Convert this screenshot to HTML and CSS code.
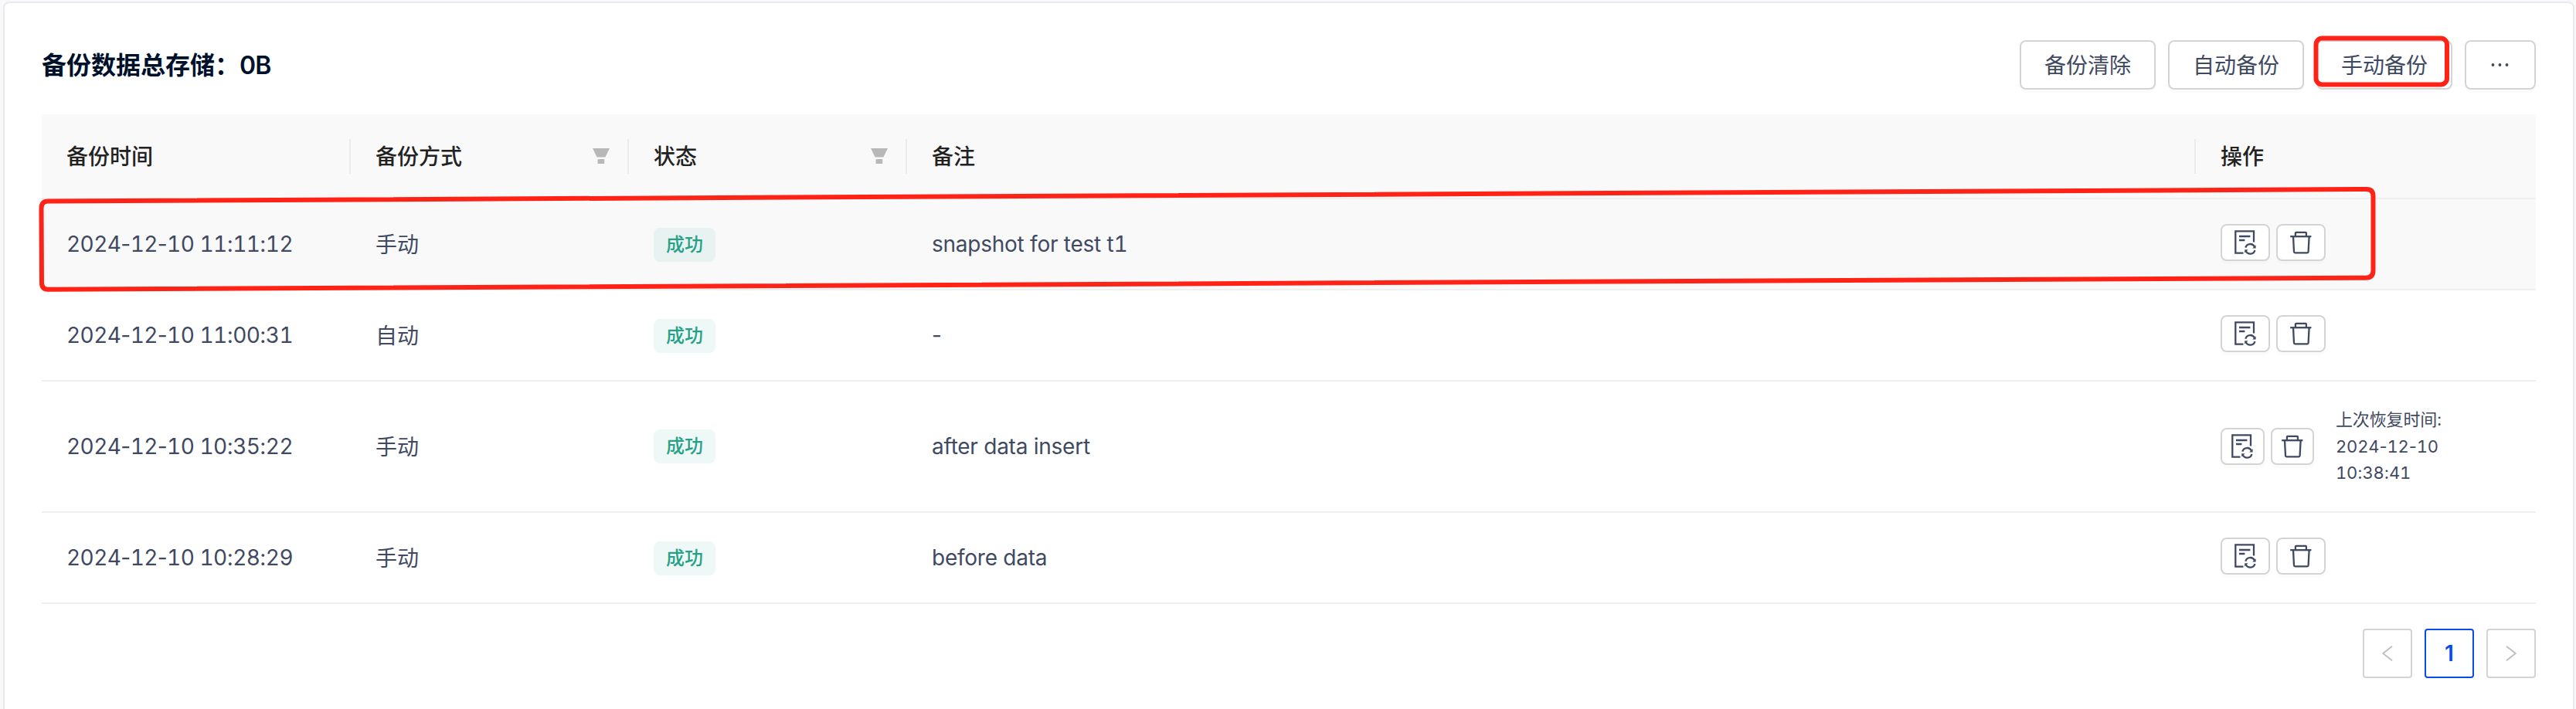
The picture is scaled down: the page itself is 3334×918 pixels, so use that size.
FILE: index.html
```html
<!DOCTYPE html>
<html lang="zh-CN">
<head>
    <meta charset="UTF-8">
    <meta name="viewport" content="width=device-width, initial-scale=1.0">
    <title>备份管理</title>
    <link rel="stylesheet" href="styles.css">
</head>
<body>
    <!-- Shared icons -->
    <svg class="icon-defs" width="0" height="0">
        <symbol id="icon-restore" viewBox="0 0 32 32">
            <path d="M13.5 29.6H3.3V1.4H27V15.4" />
            <path d="M8 8H22.4M8 13H15.4" />
            <path d="M16.3 22.6A6.2 6.2 0 0 1 28 21.8M28.4 26A6.2 6.2 0 0 1 16.7 26.9" />
            <path class="solid" d="M29.6 19.2V23.4H25.2ZM15.2 29.4V25.2H19.6Z" />
        </symbol>
        <symbol id="icon-trash" viewBox="0 0 32 32">
            <path d="M2.2 8.2H29.4" />
            <path d="M8.9 8V3.8Q8.9 2.9 9.8 2.9H22Q22.9 2.9 22.9 3.8V8" />
            <path d="M6 8.4L7 28Q7.1 29.3 8.4 29.3H24.2Q25.5 29.3 25.6 28L26.6 8.4" />
        </symbol>
        <symbol id="icon-filter" viewBox="0 0 22 20">
            <path d="M0 0H22L16.4 11.5H5.6ZM6.6 14H15.2V20H6.6Z" />
        </symbol>
    </svg>

    <div class="card">
        <div class="card-header">
            <h1>备份数据总存储：<span>0B</span></h1>
            <div class="toolbar">
                <button class="btn">备份清除</button>
                <button class="btn">自动备份</button>
                <button class="btn">手动备份</button>
                <button class="btn btn-more">
                    <svg width="24" height="6" viewBox="0 0 24 6"><circle cx="2.5" cy="3" r="1.9"/><circle cx="11.5" cy="3" r="1.9"/><circle cx="20.5" cy="3" r="1.9"/></svg>
                </button>
            </div>
        </div>

        <table class="backup-table">
            <colgroup>
                <col class="col-time">
                <col class="col-type">
                <col class="col-status">
                <col class="col-note">
                <col class="col-action">
            </colgroup>
            <thead>
                <tr>
                    <th><div class="th-inner"><span>备份时间</span></div></th>
                    <th><div class="th-inner"><span>备份方式</span><svg class="filter"><use href="#icon-filter"/></svg></div></th>
                    <th><div class="th-inner"><span>状态</span><svg class="filter"><use href="#icon-filter"/></svg></div></th>
                    <th><div class="th-inner"><span>备注</span></div></th>
                    <th><div class="th-inner"><span>操作</span></div></th>
                </tr>
            </thead>
            <tbody>
                <tr class="active">
                    <td class="time">2024<i>-</i>12<i>-</i>10<i> </i>11<i>:</i>11<i>:</i>12</td>
                    <td class="type">手动</td>
                    <td><span class="tag">成功</span></td>
                    <td class="note">snapshot for test t<span class="num">1</span></td>
                    <td>
                        <div class="actions">
                            <button class="icon-btn"><svg><use href="#icon-restore"/></svg></button>
                            <button class="icon-btn"><svg><use href="#icon-trash"/></svg></button>
                        </div>
                    </td>
                </tr>
                <tr>
                    <td class="time">2024<i>-</i>12<i>-</i>10<i> </i>11<i>:</i>00<i>:</i>31</td>
                    <td class="type">自动</td>
                    <td><span class="tag">成功</span></td>
                    <td class="note">-</td>
                    <td>
                        <div class="actions">
                            <button class="icon-btn"><svg><use href="#icon-restore"/></svg></button>
                            <button class="icon-btn"><svg><use href="#icon-trash"/></svg></button>
                        </div>
                    </td>
                </tr>
                <tr class="tall">
                    <td class="time">2024<i>-</i>12<i>-</i>10<i> </i>10<i>:</i>35<i>:</i>22</td>
                    <td class="type">手动</td>
                    <td><span class="tag">成功</span></td>
                    <td class="note">after data insert</td>
                    <td>
                        <div class="actions compact">
                            <button class="icon-btn"><svg><use href="#icon-restore"/></svg></button>
                            <button class="icon-btn"><svg><use href="#icon-trash"/></svg></button>
                            <div class="last-restore">上次恢复时间<i>:</i><br>2024<i>-</i>12<i>-</i>10<br>10<i>:</i>38<i>:</i>41</div>
                        </div>
                    </td>
                </tr>
                <tr>
                    <td class="time">2024<i>-</i>12<i>-</i>10<i> </i>10<i>:</i>28<i>:</i>29</td>
                    <td class="type">手动</td>
                    <td><span class="tag">成功</span></td>
                    <td class="note">before data</td>
                    <td>
                        <div class="actions">
                            <button class="icon-btn"><svg><use href="#icon-restore"/></svg></button>
                            <button class="icon-btn"><svg><use href="#icon-trash"/></svg></button>
                        </div>
                    </td>
                </tr>
            </tbody>
        </table>

        <div class="pagination">
            <button class="page"><svg width="14" height="20" viewBox="0 0 14 20"><path d="M13 .8L1.2 10L13 19.2"/></svg></button>
            <button class="page current">1</button>
            <button class="page"><svg width="14" height="20" viewBox="0 0 14 20"><path d="M1 .8L12.8 10L1 19.2"/></svg></button>
        </div>
    </div>

    <!-- Red marks over the manual backup button and its record -->
    <svg class="marks" viewBox="0 0 3334 918">
        <rect x="2997.5" y="49.5" width="169.5" height="60" rx="8" />
        <path d="M62 260.5L3063 245Q3071.5 245 3071.5 254V350Q3071.5 359.7 3062 359.7L62 374.7Q54 374.7 54 366L53.5 270Q53.5 260.5 62 260.5Z" />
    </svg>
</body>
</html>
```
FILE: styles.css
```css
:root {
    --text: #3f4a62;
    --title: #00112c;
    --border: #d4d4d4;
    --line: #efeff0;
    --blue: #0a4be8;
    --green: #26a188;
    --red: #ff2217;
}

* {
    margin: 0;
    padding: 0;
    box-sizing: border-box;
}

body {
    height: 918px;
    padding: 2px 2px 0 4px;
    background: #f9f9fa;
    color: var(--text);
    font-family: Inter, 'Noto Sans CJK SC', sans-serif;
    font-size: 28px;
    overflow: hidden;
}

button {
    font-family: inherit;
    color: inherit;
    background: #fff;
}

.icon-defs {
    position: absolute;
}

.card {
    height: 940px;
    padding: 48px;
    background: #fff;
    border: 2px solid #e9e9ef;
    border-radius: 8px;
}

.card-header {
    display: flex;
    justify-content: space-between;
    align-items: center;
    height: 64px;
    margin-bottom: 32px;
}

h1 {
    padding-top: 2px;
    font-size: 32px;
    line-height: 48px;
    font-weight: 600;
    color: var(--title);
}

h1 span {
    letter-spacing: -1px;
}

.toolbar {
    display: flex;
    gap: 16px;
}

.btn {
    display: flex;
    align-items: center;
    justify-content: center;
    width: 176px;
    height: 64px;
    padding-bottom: 2px;
    font-size: 28px;
    border: 2px solid var(--border);
    border-radius: 8px;
    box-shadow: 0 4px 0 rgba(0, 0, 0, 0.015);
}

.btn-more {
    width: 92px;
    padding-bottom: 0;
    fill: var(--text);
}

/* Table */
.backup-table {
    width: 3228px;
    table-layout: fixed;
    border-spacing: 0;
}

.col-time {
    width: 400px;
}

.col-type,
.col-status {
    width: 360px;
}

.col-note {
    width: 1668px;
}

.col-action {
    width: 440px;
}

th {
    height: 110px;
    text-align: left;
    font-weight: 500;
    line-height: 42px;
    color: #222;
    background: #f9f9f9;
    border-bottom: 2px solid var(--line);
}

th:first-child {
    border-top-left-radius: 4px;
}

th:last-child {
    border-top-right-radius: 4px;
}

.th-inner {
    display: flex;
    align-items: center;
    justify-content: space-between;
    height: 45px;
    padding: 0 23px 0 32px;
    border-right: 2px solid #ebebeb;
}

.th-inner span {
    padding-top: 2px;
}

th:last-child .th-inner {
    border-right: none;
}

.filter {
    width: 22px;
    height: 20px;
    fill: #b8b8b8;
}

td {
    height: 118px;
    padding: 0 32px;
    vertical-align: middle;
    border-bottom: 2px solid var(--line);
}

.tall td {
    height: 170px;
}

.active td {
    background: #f9f9f9;
}

/* Digits share one width, separators keep their own */
.time,
.last-restore,
.num {
    font-variant-numeric: tabular-nums;
    white-space: nowrap;
}

.time {
    letter-spacing: -0.58px;
}

.time i,
.last-restore i {
    font-style: normal;
    font-variant-numeric: normal;
}

.type {
    padding-bottom: 2px;
}

.note {
    letter-spacing: -0.25px;
}

.tag {
    display: block;
    width: 80px;
    height: 44px;
    margin-top: 2px;
    line-height: 44px;
    text-align: center;
    font-size: 24px;
    font-weight: 500;
    color: var(--green);
    background: rgba(38, 161, 136, 0.08);
    border-radius: 8px;
}

.tall .tag {
    margin-top: 0;
}

.actions {
    display: flex;
    align-items: center;
    gap: 8px;
    margin-bottom: 4px;
}

.icon-btn {
    display: flex;
    align-items: center;
    justify-content: center;
    flex: none;
    width: 64px;
    height: 48px;
    border: 2px solid var(--border);
    border-radius: 8px;
    box-shadow: 0 4px 0 rgba(0, 0, 0, 0.015);
}

.icon-btn svg {
    flex: none;
    width: 32px;
    height: 32px;
    fill: none;
    stroke: var(--text);
    stroke-width: 2.3;
}

.solid {
    fill: var(--text);
    stroke: none;
}

.compact {
    margin-bottom: 0;
}

.compact .icon-btn {
    width: 56.5px;
}

.last-restore {
    margin-left: 20px;
    font-size: 22px;
    line-height: 34.5px;
    letter-spacing: -0.15px;
}

/* Pagination */
.pagination {
    display: flex;
    justify-content: flex-end;
    gap: 16px;
    margin-top: 32px;
}

.page {
    display: flex;
    align-items: center;
    justify-content: center;
    width: 64px;
    height: 64px;
    border: 2px solid var(--border);
    border-radius: 4px;
}

.page svg {
    fill: none;
    stroke: #bfbfbf;
    stroke-width: 2;
}

.current {
    font-size: 28px;
    font-weight: 600;
    color: var(--blue);
    border-color: var(--blue);
}

.marks {
    position: absolute;
    top: 0;
    left: 0;
    width: 3334px;
    height: 918px;
    fill: none;
    stroke: var(--red);
    stroke-width: 6;
    pointer-events: none;
}
```
